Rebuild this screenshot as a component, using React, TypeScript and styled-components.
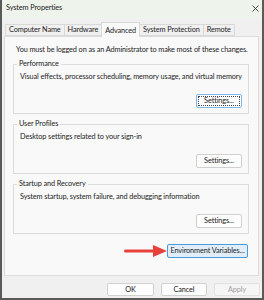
import styled, { createGlobalStyle } from "styled-components";

const GlobalStyle = createGlobalStyle`
  html, body {
    margin: 0;
    padding: 0;
    background: #f0f0f0;
  }
  body {
    font-family: Lato, "Noto Sans", sans-serif;
  }
`;

const Window = styled.div`
  width: 264px;
  height: 300px;
  box-sizing: border-box;
  border: 2px solid #5a5a5a;
  border-top: none;
  background: #f0f0f0;
  display: flex;
  flex-direction: column;
  font-size: 7.3px;
  letter-spacing: -0.1px;
  color: #1b1b1b;
  overflow: hidden;
`;

const TitleBar = styled.div`
  height: 18px;
  box-sizing: border-box;
  padding: 0 3px 2px 4px;
  background: #eef4ec;
  display: flex;
  align-items: center;
  justify-content: space-between;
  line-height: 10px;
`;

const Close = styled.svg`
  width: 7px;
  height: 7px;
  color: #333;
`;

const TabStrip = styled.div`
  margin: 4px 3px 0 2px;
  padding-left: 1px;
  height: 14px;
  display: flex;
  align-items: flex-end;
  position: relative;
  z-index: 1;
`;

const Tab = styled.div<{ $active?: boolean }>`
  box-sizing: border-box;
  height: ${(p) => (p.$active ? "15px" : "12px")};
  margin-left: -1px;
  margin-bottom: ${(p) => (p.$active ? "-1px" : "0")};
  padding: 0 3px;
  padding-top: ${(p) => (p.$active ? "1px" : "0")};
  border: 1px solid #d9d9d9;
  border-bottom: ${(p) => (p.$active ? "none" : "1px solid #d9d9d9")};
  background: ${(p) => (p.$active ? "#f9f9f9" : "#f0f0f0")};
  display: flex;
  align-items: center;
  line-height: 10px;
  white-space: nowrap;
  &:first-child {
    margin-left: 0;
  }
`;

const Panel = styled.div`
  margin: 0 3px 0 2px;
  height: 240px;
  box-sizing: border-box;
  border: 1px solid #dcdcdc;
  background: #f9f9f9;
  padding: 8px 9px 0 8px;
  display: flex;
  flex-direction: column;
`;

const Notice = styled.div`
  padding-left: 3px;
  line-height: 10px;
  margin-bottom: 4px;
  white-space: nowrap;
`;

const Groups = styled.div`
  display: flex;
  flex-direction: column;
  gap: 5px;
`;

const Group = styled.fieldset`
  margin: 0;
  padding: 0 6px 5px 6px;
  border: 1px solid #dcdcdc;
  min-width: 0;
  display: flex;
  flex-direction: column;
`;

const Legend = styled.legend`
  padding: 0 2px;
  margin-left: -3px;
  line-height: 10px;
`;

const Description = styled.div`
  margin-top: 3px;
  line-height: 10px;
  white-space: nowrap;
`;

const Actions = styled.div`
  margin-top: 12px;
  display: flex;
  justify-content: flex-end;
`;

type Variant = "default" | "focused" | "primary" | "disabled";

const Button = styled.button<{ $variant?: Variant; $width?: number }>`
  box-sizing: border-box;
  width: ${(p) => p.$width ?? 46}px;
  height: 14px;
  padding: 0;
  font: inherit;
  letter-spacing: inherit;
  line-height: 10px;
  color: ${(p) => (p.$variant === "disabled" ? "#a0a0a0" : "#1b1b1b")};
  background: ${(p) =>
    p.$variant === "primary"
      ? "#e1eefa"
      : p.$variant === "disabled"
      ? "#f5f5f5"
      : "#fdfdfd"};
  border: 1px solid
    ${(p) =>
      p.$variant === "primary"
        ? "#4a9ade"
        : p.$variant === "focused"
        ? "#7db9e8"
        : p.$variant === "disabled"
        ? "#e2e2e2"
        : "#d0d0d0"};
  border-radius: 2px;
  outline: ${(p) => (p.$variant === "focused" ? "1px dotted #444" : "none")};
  outline-offset: -3px;
  white-space: nowrap;
`;

const EnvRow = styled.div`
  margin-top: 10px;
  padding-right: 1px;
  display: flex;
  align-items: center;
  justify-content: flex-end;
`;

const Arrow = styled.svg`
  width: 43px;
  height: 14px;
  display: block;
`;

const Footer = styled.div`
  height: 22px;
  box-sizing: border-box;
  padding: 7px 2px 0 0;
  display: flex;
  justify-content: flex-end;
  gap: 7px;
`;

const FooterButton = styled(Button)`
  height: 13px;
`;

const groups = [
  {
    title: "Performance",
    text: "Visual effects, processor scheduling, memory usage, and virtual memory",
    focused: true,
  },
  {
    title: "User Profiles",
    text: "Desktop settings related to your sign-in",
    focused: false,
  },
  {
    title: "Startup and Recovery",
    text: "System startup, system failure, and debugging information",
    focused: false,
  },
];

const tabs = [
  "Computer Name",
  "Hardware",
  "Advanced",
  "System Protection",
  "Remote",
];

export default function App() {
  return (
    <>
      <GlobalStyle />
      <Window>
        <TitleBar>
          <span>System Properties</span>
          <Close viewBox="0 0 7 7">
            <path
              d="M0.5 0.5L6.5 6.5M6.5 0.5L0.5 6.5"
              stroke="currentColor"
              strokeWidth="0.9"
              fill="none"
            />
          </Close>
        </TitleBar>
        <TabStrip>
          {tabs.map((t) => (
            <Tab key={t} $active={t === "Advanced"}>
              {t}
            </Tab>
          ))}
        </TabStrip>
        <Panel>
          <Notice>
            You must be logged on as an Administrator to make most of these
            changes.
          </Notice>
          <Groups>
            {groups.map((g) => (
              <Group key={g.title}>
                <Legend>{g.title}</Legend>
                <Description>{g.text}</Description>
                <Actions>
                  <Button $variant={g.focused ? "focused" : "default"}>
                    Settings...
                  </Button>
                </Actions>
              </Group>
            ))}
          </Groups>
          <EnvRow>
            <Arrow viewBox="0 0 43 14">
              <line
                x1="1.5"
                y1="7"
                x2="31"
                y2="7"
                stroke="#e8403a"
                strokeWidth="3"
                strokeLinecap="round"
              />
              <polygon points="29,1 43,7 29,13" fill="#e8403a" />
            </Arrow>
            <Button $variant="primary" $width={81}>
              Environment Variables...
            </Button>
          </EnvRow>
        </Panel>
        <Footer>
          <FooterButton $width={47}>OK</FooterButton>
          <FooterButton $width={46}>Cancel</FooterButton>
          <FooterButton $width={46} $variant="disabled">
            Apply
          </FooterButton>
        </Footer>
      </Window>
    </>
  );
}
